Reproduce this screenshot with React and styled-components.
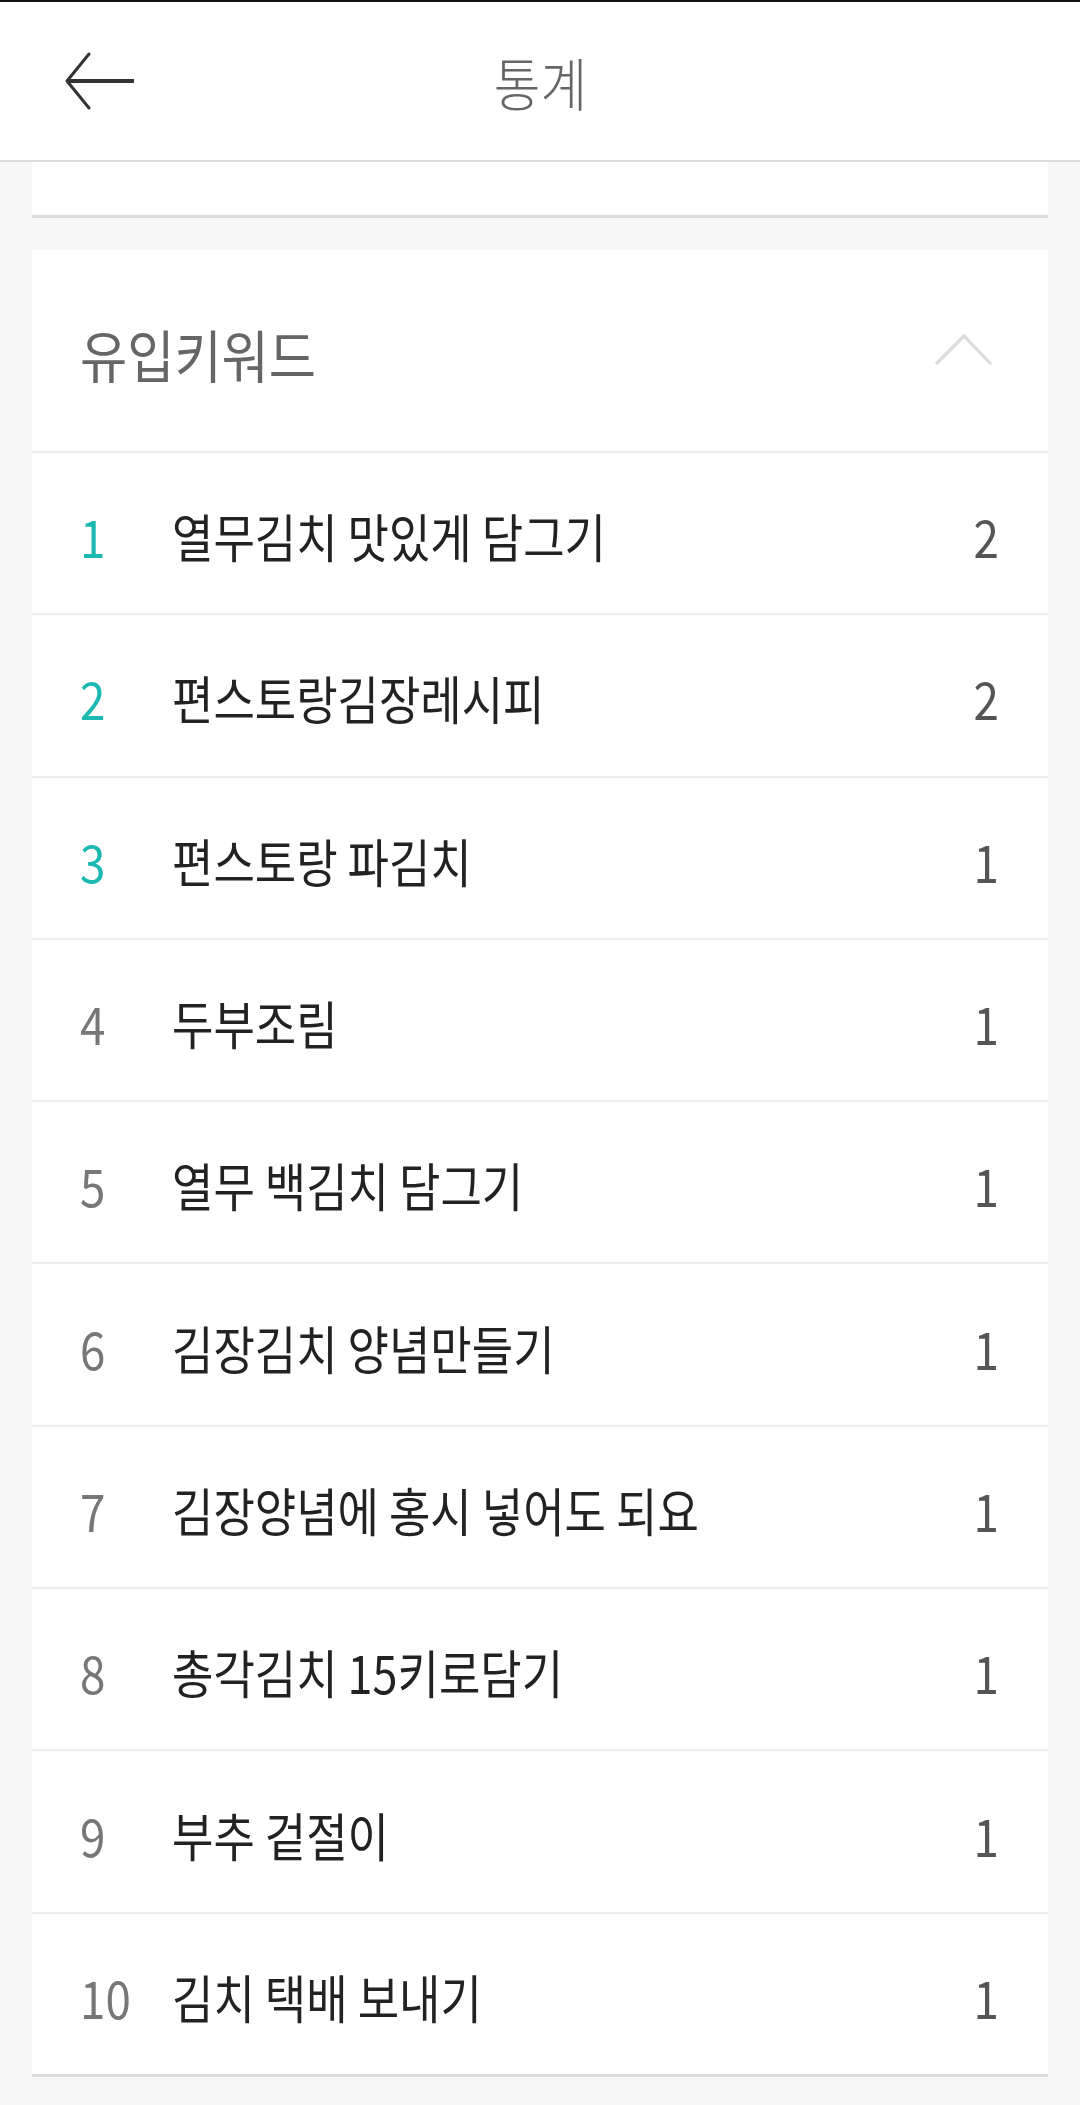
import React from "react";
import styled, { createGlobalStyle } from "styled-components";

const GlobalStyle = createGlobalStyle`
  html, body {
    margin: 0;
    padding: 0;
    background: #f7f7f7;
    font-family: "Noto Sans CJK KR", "Noto Sans", sans-serif;
  }
  * { box-sizing: border-box; }
`;

const Page = styled.div`
  min-height: 2105px;
  background: #f7f7f7;
`;

const Header = styled.header`
  height: 162px;
  background: #fff;
  border-top: 2px solid #111;
  border-bottom: 2px solid #dcdcdc;
  display: grid;
  grid-template-columns: 1fr auto 1fr;
  align-items: center;
`;

const BackButton = styled.button`
  justify-self: start;
  margin-left: 64px;
  padding: 0;
  border: 0;
  background: none;
  display: flex;
  align-items: center;
  cursor: pointer;
`;

const Title = styled.h1`
  margin: 0;
  font-size: 57px;
  font-weight: 300;
  color: #666;
  line-height: 1;
  transform: scaleX(0.89);
  transform-origin: center;
`;

const Content = styled.main`
  padding: 0 32px;
  display: flex;
  flex-direction: column;
  gap: 32px;
`;

const StubCard = styled.div`
  height: 56px;
  background: #fff;
  border-bottom: 3px solid #dcdcdc;
`;

const Card = styled.section`
  background: #fff;
  border-bottom: 3px solid #dcdcdc;
`;

const CardHeader = styled.div`
  height: 203px;
  padding: 6px 54px 0 48px;
  display: flex;
  align-items: center;
  justify-content: space-between;
  border-bottom: 2px solid #ededed;
`;

const SectionTitle = styled.h2`
  margin: 0;
  font-size: 57px;
  font-weight: 400;
  color: #666;
  line-height: 1;
  transform: scaleX(0.9);
  transform-origin: left center;
`;

const Toggle = styled.button`
  padding: 0;
  border: 0;
  background: none;
  display: flex;
  margin-top: -8px;
`;

const List = styled.ol`
  margin: 0;
  padding: 0;
  list-style: none;
`;

const Row = styled.li`
  height: 162.3px;
  padding: 6px 49px 0 48px;
  display: flex;
  align-items: center;
  border-bottom: 2px solid #ededed;
  &:last-child {
    height: 160.3px;
    border-bottom: 0;
  }
`;

const Rank = styled.span`
  width: 92px;
  flex: none;
  font-size: 52px;
  line-height: 1;
  color: ${(p) => (p.$top ? "#1cb8b2" : "#777")};
  transform: scaleX(0.88);
  transform-origin: left center;
`;

const Keyword = styled.span`
  flex: 1;
  font-size: 52px;
  line-height: 1;
  color: #222;
  white-space: nowrap;
  transform: scaleX(0.865);
  transform-origin: left center;
`;

const Count = styled.span`
  font-size: 52px;
  line-height: 1;
  color: #555;
  transform: scaleX(0.88);
  transform-origin: right center;
`;

const ArrowIcon = () => (
  <svg width="72" height="58" viewBox="0 0 72 58" fill="none">
    <path d="M3 29 H70" stroke="#333" strokeWidth="4" />
    <path d="M25 2 L3 29 L25 56" stroke="#333" strokeWidth="3" strokeLinecap="round" strokeLinejoin="round" />
  </svg>
);

const ChevronUp = () => (
  <svg width="60" height="32" viewBox="0 0 60 32" fill="none">
    <path d="M2 30 L30 2 L57 30" stroke="#dcdcdc" strokeWidth="3.2" />
  </svg>
);

const keywords = [
  ["열무김치 맛있게 담그기", 2],
  ["편스토랑김장레시피", 2],
  ["편스토랑 파김치", 1],
  ["두부조림", 1],
  ["열무 백김치 담그기", 1],
  ["김장김치 양념만들기", 1],
  ["김장양념에 홍시 넣어도 되요", 1],
  ["총각김치 15키로담기", 1],
  ["부추 겉절이", 1],
  ["김치 택배 보내기", 1],
];

export default function App() {
  return (
    <Page>
      <GlobalStyle />
      <Header>
        <BackButton aria-label="뒤로">
          <ArrowIcon />
        </BackButton>
        <Title>통계</Title>
        <span />
      </Header>
      <Content>
        <StubCard />
        <Card>
          <CardHeader>
            <SectionTitle>유입키워드</SectionTitle>
            <Toggle aria-label="접기">
              <ChevronUp />
            </Toggle>
          </CardHeader>
          <List>
            {keywords.map(([word, count], i) => (
              <Row key={word}>
                <Rank $top={i < 3}>{i + 1}</Rank>
                <Keyword>{word}</Keyword>
                <Count>{count}</Count>
              </Row>
            ))}
          </List>
        </Card>
      </Content>
    </Page>
  );
}
